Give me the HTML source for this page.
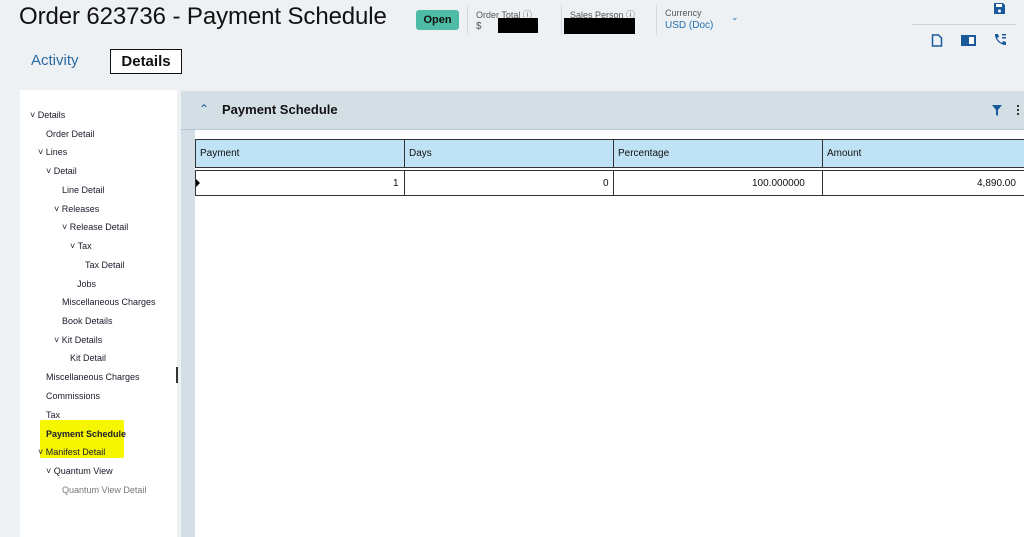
<!DOCTYPE html>
<html><head><style>
*{margin:0;padding:0;box-sizing:border-box}
body{width:1024px;height:537px;overflow:hidden;background:#eef1f4;font-family:"Liberation Sans",sans-serif;position:relative;color:#111}
.a{position:absolute;white-space:nowrap}
.t{font-size:9px;color:#1a1a2a}
.hd{font-size:10px;color:#111;top:148px}
.cell{position:absolute;border:1.5px solid #333}
</style></head><body>
<div class="a" style="left:19px;top:3px;font-size:24px;letter-spacing:-0.1px;color:#111">Order 623736 - Payment Schedule</div>
<div class="a" style="left:416px;top:10px;width:43px;height:20px;background:#4dbba5;border-radius:3px;font-size:11px;font-weight:bold;text-align:center;line-height:20px">Open</div>
<div class="a" style="left:467px;top:5px;width:1px;height:30px;background:#d4d8dc"></div>
<div class="a" style="left:476px;top:8px;font-size:9px;color:#555">Order Total ⓘ</div>
<div class="a" style="left:476px;top:21px;font-size:10px;color:#555">$</div>
<div class="a" style="left:498px;top:18px;width:40px;height:15px;background:#000"></div>
<div class="a" style="left:561px;top:5px;width:1px;height:30px;background:#d4d8dc"></div>
<div class="a" style="left:570px;top:8px;font-size:9px;color:#555">Sales Person ⓘ</div>
<div class="a" style="left:564px;top:18px;width:71px;height:16px;background:#000"></div>
<div class="a" style="left:656px;top:5px;width:1px;height:30px;background:#d4d8dc"></div>
<div class="a" style="left:665px;top:8px;font-size:9px;color:#555">Currency</div>
<div class="a" style="left:665px;top:20px;font-size:10px;color:#1f6fb0">USD (Doc)</div>
<div class="a" style="left:731px;top:12px;font-size:9px;color:#1f6fb0">⌄</div>
<div class="a" style="left:912px;top:24px;width:104px;height:1px;background:#cfd4d8"></div>
<svg class="a" style="left:993px;top:2px" width="13" height="13" viewBox="0 0 13 13"><path d="M1 1h9l2 2v9H1z" fill="#1b5a9a"/><rect x="3" y="2" width="6" height="3" fill="#fff"/><circle cx="6.5" cy="9" r="1.5" fill="#fff"/></svg>
<svg class="a" style="left:931px;top:34px" width="12" height="13" viewBox="0 0 12 13"><path d="M1.5 1h6l3 3v8h-9z" fill="none" stroke="#1b5a9a" stroke-width="1.5"/></svg>
<svg class="a" style="left:961px;top:35px" width="15" height="11" viewBox="0 0 15 11"><rect x="0" y="0" width="15" height="11" fill="#1b5a9a"/><rect x="8" y="2" width="5" height="7" fill="#fff"/></svg>
<svg class="a" style="left:993px;top:33px" width="14" height="14" viewBox="0 0 14 14"><path d="M2 1l3 0 1 3-2 1c1 2 3 4 5 5l1-2 3 1v3c-6 0-11-5-11-11z" fill="#1b5a9a"/><rect x="9" y="1" width="4" height="1.5" fill="#1b5a9a"/><rect x="9" y="4" width="4" height="1.5" fill="#1b5a9a"/></svg>
<div class="a" style="left:31px;top:52px;font-size:15px;color:#2a6aa0">Activity</div>
<div class="a" style="left:110px;top:49px;width:72px;height:25px;border:1px solid #111;background:#fff;font-size:15px;font-weight:bold;text-align:center;line-height:23px">Details</div>

<div class="a" style="left:20px;top:90px;width:157px;height:447px;background:#fff"></div>
<div class="a" style="left:40px;top:420px;width:84px;height:38px;background:#f6f600;border-radius:2px"></div>
<div class="a" style="left:176px;top:367px;width:2px;height:16px;background:#333"></div>
<div class="a t" style="left:30px;top:110px">˅ Details</div>
<div class="a t" style="left:46px;top:129px">Order Detail</div>
<div class="a t" style="left:38px;top:147px">˅ Lines</div>
<div class="a t" style="left:46px;top:166px">˅ Detail</div>
<div class="a t" style="left:62px;top:185px">Line Detail</div>
<div class="a t" style="left:54px;top:204px">˅ Releases</div>
<div class="a t" style="left:62px;top:222px">˅ Release Detail</div>
<div class="a t" style="left:70px;top:241px">˅ Tax</div>
<div class="a t" style="left:85px;top:260px">Tax Detail</div>
<div class="a t" style="left:77px;top:279px">Jobs</div>
<div class="a t" style="left:62px;top:297px">Miscellaneous Charges</div>
<div class="a t" style="left:62px;top:316px">Book Details</div>
<div class="a t" style="left:54px;top:335px">˅ Kit Details</div>
<div class="a t" style="left:70px;top:353px">Kit Detail</div>
<div class="a t" style="left:46px;top:372px">Miscellaneous Charges</div>
<div class="a t" style="left:46px;top:391px">Commissions</div>
<div class="a t" style="left:46px;top:410px">Tax</div>
<div class="a t" style="left:46px;top:429px;font-weight:bold">Payment Schedule</div>
<div class="a t" style="left:38px;top:447px">˅ Manifest Detail</div>
<div class="a t" style="left:46px;top:466px">˅ Quantum View</div>
<div class="a t" style="left:62px;top:485px;color:#777">Quantum View Detail</div>

<div class="a" style="left:181px;top:91px;width:843px;height:446px;background:#d4dfe5"></div>
<div class="a" style="left:181px;top:129px;width:843px;height:1px;background:#b8c8d2"></div>
<div class="a" style="left:195px;top:130px;width:829px;height:407px;background:#fff"></div>
<div class="a" style="left:199px;top:102px;font-size:12px;color:#1b5a9a">⌃</div>
<div class="a" style="left:222px;top:102px;font-size:13px;font-weight:bold;color:#111">Payment Schedule</div>
<svg class="a" style="left:992px;top:105px" width="10" height="11" viewBox="0 0 10 11"><path d="M0 0h10L6 5v6L4 10V5z" fill="#1b5a9a"/></svg>
<div class="a" style="left:1017px;top:105px;width:2px;height:10px;border-left:2px dotted #333"></div>

<div class="cell" style="left:195px;top:139px;width:210px;height:29px;background:#bfe3f5"></div>
<div class="cell" style="left:404px;top:139px;width:210px;height:29px;background:#bfe3f5"></div>
<div class="cell" style="left:613px;top:139px;width:210px;height:29px;background:#bfe3f5"></div>
<div class="cell" style="left:822px;top:139px;width:210px;height:29px;background:#bfe3f5"></div>
<div class="a hd" style="left:200px">Payment</div>
<div class="a hd" style="left:409px">Days</div>
<div class="a hd" style="left:618px">Percentage</div>
<div class="a hd" style="left:827px">Amount</div>
<div class="cell" style="left:195px;top:170px;width:210px;height:26px"></div>
<div class="cell" style="left:404px;top:170px;width:210px;height:26px"></div>
<div class="cell" style="left:613px;top:170px;width:210px;height:26px"></div>
<div class="cell" style="left:822px;top:170px;width:210px;height:26px"></div>
<div class="a" style="left:196px;top:179px;width:0;height:0;border-top:4px solid transparent;border-bottom:4px solid transparent;border-left:4px solid #000"></div>
<div class="a" style="left:393px;top:178px;font-size:10px">1</div>
<div class="a" style="left:603px;top:178px;font-size:10px">0</div>
<div class="a" style="left:752px;top:178px;font-size:10px">100.000000</div>
<div class="a" style="left:977px;top:178px;font-size:10px">4,890.00</div>
</body></html>
